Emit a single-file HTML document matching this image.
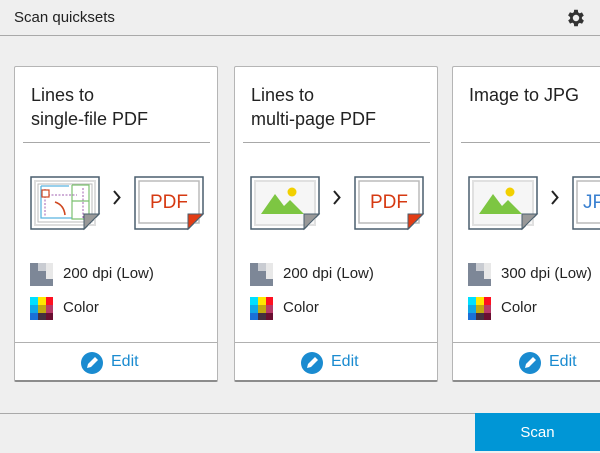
<!DOCTYPE html>
<html><head><meta charset="utf-8"><style>
*{margin:0;padding:0;box-sizing:border-box}
body{width:600px;height:451px;background:#efefef;font-family:"Liberation Sans",sans-serif;position:relative;overflow:hidden;color:#222}
.hdr{position:absolute;left:0;top:0;width:600px;height:36px;border-bottom:1px solid #a9a9a9}
.hdr span{position:absolute;left:14px;top:9px;font-size:15px}
.card{position:absolute;top:66px;width:204px;height:316px;background:#fff;border:1px solid #b5b5b5;border-bottom:2px solid #8c8c8c;border-radius:2px;overflow:hidden}
.t{position:absolute;left:16px;top:16px;font-size:18px;line-height:24px;color:#222}
.div{position:absolute;left:8px;right:7px;top:75px;border-top:1px solid #a8a8a8}
.ic{position:absolute;left:0;top:104px}
.p{position:absolute;left:48px;font-size:15px}
.ft{position:absolute;left:0;right:0;top:275px;border-top:1px solid #b0b0b0;height:39px}
.ed{position:absolute;left:66px;top:9px;font-size:16px;color:#1a8bd0}
.ed svg{position:absolute;left:0;top:0}
.ed span{position:absolute;left:30px;top:1px}
.bot{position:absolute;left:0;top:413px;width:600px;border-top:1px solid #a9a9a9}
.scan{position:absolute;left:475px;top:413px;width:125px;height:38px;background:#0096d6;color:#fff;font-size:15px;text-align:center;line-height:40px}
</style></head><body>
<div class="hdr"><span>Scan quicksets</span>
<svg style="position:absolute;left:565px;top:7px" width="22" height="22" viewBox="0 0 24 24"><path fill="#333" d="M19.4 13a7.5 7.5 0 0 0 0-2l2.1-1.6-2-3.5-2.5 1a7.6 7.6 0 0 0-1.7-1L15 3h-4l-.4 2.7a7.6 7.6 0 0 0-1.7 1l-2.5-1-2 3.5L6.6 11a7.5 7.5 0 0 0 0 2l-2.1 1.6 2 3.5 2.5-1a7.6 7.6 0 0 0 1.7 1L11 21h4l.4-2.7a7.6 7.6 0 0 0 1.7-1l2.5 1 2-3.5zM13 15.5a3.5 3.5 0 1 1 0-7 3.5 3.5 0 0 1 0 7z" transform="translate(-1 0)"/></svg></div>

<div class="card" style="left:14px">
<div class="t">Lines to<br>single-file PDF</div><div class="div"></div>
<svg class="ic" width="204" height="62">
<path d="M16 6h68v37l-15 15H16z" fill="#fff" stroke="#4a5f6e" stroke-width="1.5"/>
<rect x="20" y="10" width="60" height="44" fill="none" stroke="#ddd" stroke-width="2"/>
<rect x="23" y="13" width="54" height="38" fill="none" stroke="#bbb"/>
<path d="M26 15h28M26 15v32h31" fill="none" stroke="#5bb5e0" stroke-width="1.3"/>
<path d="M30 18v28M26 24h36M68 17v31" stroke="#a05fb0" stroke-width="1" stroke-dasharray="2 1.5" fill="none"/>
<rect x="27" y="19" width="7" height="7" fill="#fff" stroke="#d04820" stroke-width="1.2"/>
<path d="M40 31q9 3 10 13" fill="none" stroke="#d04820" stroke-width="1.6"/>
<path d="M57 14h17v34H57v-34M57 30h17" fill="none" stroke="#7cc070" stroke-width="1.2"/>
<path d="M84 43L69 58V43z" fill="#999" stroke="#4a5f6e" stroke-width="1"/>
<path d="M99 20l5.5 6.5-5.5 6.5" fill="none" stroke="#222" stroke-width="2"/>
<path d="M120 6h68v37l-15 15h-53z" fill="#fff" stroke="#4a5f6e" stroke-width="1.5"/>
<rect x="124" y="10" width="60" height="42" fill="none" stroke="#bbb" stroke-width="1.5"/>
<text x="154" y="37" font-size="19" fill="#d63a12" text-anchor="middle" font-family="Liberation Sans">PDF</text>
<path d="M188 43L173 58V43z" fill="#e23c14" stroke="#4a5f6e" stroke-width="1"/>
</svg>
<svg style="position:absolute;left:15px;top:196px" width="24" height="24"><rect width="23" height="23" fill="#7d8797"/><rect x="8" width="15" height="8" fill="#e8e8e8"/><rect x="16" y="8" width="7" height="8" fill="#e8e8e8"/><rect x="8" width="8" height="8" fill="#c9ccd2"/></svg>
<div class="p" style="top:198px">200 dpi (Low)</div>
<svg style="position:absolute;left:15px;top:230px" width="24" height="24"><rect x="0" y="0" width="8" height="8" fill="#00e0ff"/><rect x="8" y="0" width="8" height="8" fill="#ffe600"/><rect x="16" y="0" width="7" height="8" fill="#ff1020"/><rect x="0" y="8" width="8" height="8" fill="#10a8e8"/><rect x="8" y="8" width="8" height="8" fill="#c0aa10"/><rect x="16" y="8" width="7" height="8" fill="#b83a68"/><rect x="0" y="16" width="8" height="7" fill="#1a70d8"/><rect x="8" y="16" width="8" height="7" fill="#443040"/><rect x="16" y="16" width="7" height="7" fill="#6a0e30"/></svg>
<div class="p" style="top:232px">Color</div>
<div class="ft"><div class="ed"><svg width="22" height="22"><circle cx="11" cy="11" r="11" fill="#1a8bd0"/><path d="M6 16l1-4 7-7 3 3-7 7z" fill="#fff"/></svg><span>Edit</span></div></div>
</div>

<div class="card" style="left:234px">
<div class="t">Lines to<br>multi-page PDF</div><div class="div"></div>
<svg class="ic" width="204" height="62">
<path d="M16 6h68v37l-15 15H16z" fill="#fff" stroke="#4a5f6e" stroke-width="1.5"/>
<rect x="20" y="10" width="60" height="44" fill="#f6f6f6" stroke="#e0e0e0" stroke-width="2"/>
<path d="M26 43l14-20 9 12 6-6 14 14z" fill="#7dc642"/>
<circle cx="57" cy="21" r="4.5" fill="#f2d000"/>
<path d="M84 43L69 58V43z" fill="#999" stroke="#4a5f6e" stroke-width="1"/>
<path d="M99 20l5.5 6.5-5.5 6.5" fill="none" stroke="#222" stroke-width="2"/>
<path d="M120 6h68v37l-15 15h-53z" fill="#fff" stroke="#4a5f6e" stroke-width="1.5"/>
<rect x="124" y="10" width="60" height="42" fill="none" stroke="#bbb" stroke-width="1.5"/>
<text x="154" y="37" font-size="19" fill="#d63a12" text-anchor="middle" font-family="Liberation Sans">PDF</text>
<path d="M188 43L173 58V43z" fill="#e23c14" stroke="#4a5f6e" stroke-width="1"/>
</svg>
<svg style="position:absolute;left:15px;top:196px" width="24" height="24"><rect width="23" height="23" fill="#7d8797"/><rect x="8" width="15" height="8" fill="#e8e8e8"/><rect x="16" y="8" width="7" height="8" fill="#e8e8e8"/><rect x="8" width="8" height="8" fill="#c9ccd2"/></svg>
<div class="p" style="top:198px">200 dpi (Low)</div>
<svg style="position:absolute;left:15px;top:230px" width="24" height="24"><rect x="0" y="0" width="8" height="8" fill="#00e0ff"/><rect x="8" y="0" width="8" height="8" fill="#ffe600"/><rect x="16" y="0" width="7" height="8" fill="#ff1020"/><rect x="0" y="8" width="8" height="8" fill="#10a8e8"/><rect x="8" y="8" width="8" height="8" fill="#c0aa10"/><rect x="16" y="8" width="7" height="8" fill="#b83a68"/><rect x="0" y="16" width="8" height="7" fill="#1a70d8"/><rect x="8" y="16" width="8" height="7" fill="#443040"/><rect x="16" y="16" width="7" height="7" fill="#6a0e30"/></svg>
<div class="p" style="top:232px">Color</div>
<div class="ft"><div class="ed"><svg width="22" height="22"><circle cx="11" cy="11" r="11" fill="#1a8bd0"/><path d="M6 16l1-4 7-7 3 3-7 7z" fill="#fff"/></svg><span>Edit</span></div></div>
</div>

<div class="card" style="left:452px;width:148px;border-right:none;border-radius:2px 0 0 2px">
<div class="t">Image to JPG</div><div class="div" style="right:0"></div>
<svg class="ic" width="148" height="62">
<path d="M16 6h68v37l-15 15H16z" fill="#fff" stroke="#4a5f6e" stroke-width="1.5"/>
<rect x="20" y="10" width="60" height="44" fill="#f6f6f6" stroke="#e0e0e0" stroke-width="2"/>
<path d="M26 43l14-20 9 12 6-6 14 14z" fill="#7dc642"/>
<circle cx="57" cy="21" r="4.5" fill="#f2d000"/>
<path d="M84 43L69 58V43z" fill="#999" stroke="#4a5f6e" stroke-width="1"/>
<path d="M99 20l5.5 6.5-5.5 6.5" fill="none" stroke="#222" stroke-width="2"/>
<path d="M120 6h68v37l-15 15h-53z" fill="#fff" stroke="#4a5f6e" stroke-width="1.5"/>
<rect x="124" y="10" width="60" height="42" fill="none" stroke="#bbb" stroke-width="1.5"/>
<text x="130" y="37" font-size="19" fill="#3a80d0" font-family="Liberation Sans">JPG</text>
</svg>
<svg style="position:absolute;left:15px;top:196px" width="24" height="24"><rect width="23" height="23" fill="#7d8797"/><rect x="8" width="15" height="8" fill="#e8e8e8"/><rect x="16" y="8" width="7" height="8" fill="#e8e8e8"/><rect x="8" width="8" height="8" fill="#c9ccd2"/></svg>
<div class="p" style="top:198px">300 dpi (Low)</div>
<svg style="position:absolute;left:15px;top:230px" width="24" height="24"><rect x="0" y="0" width="8" height="8" fill="#00e0ff"/><rect x="8" y="0" width="8" height="8" fill="#ffe600"/><rect x="16" y="0" width="7" height="8" fill="#ff1020"/><rect x="0" y="8" width="8" height="8" fill="#10a8e8"/><rect x="8" y="8" width="8" height="8" fill="#c0aa10"/><rect x="16" y="8" width="7" height="8" fill="#b83a68"/><rect x="0" y="16" width="8" height="7" fill="#1a70d8"/><rect x="8" y="16" width="8" height="7" fill="#443040"/><rect x="16" y="16" width="7" height="7" fill="#6a0e30"/></svg>
<div class="p" style="top:232px">Color</div>
<div class="ft"><div class="ed"><svg width="22" height="22"><circle cx="11" cy="11" r="11" fill="#1a8bd0"/><path d="M6 16l1-4 7-7 3 3-7 7z" fill="#fff"/></svg><span>Edit</span></div></div>
</div>

<div class="bot"></div>
<div class="scan">Scan</div>
</body></html>
